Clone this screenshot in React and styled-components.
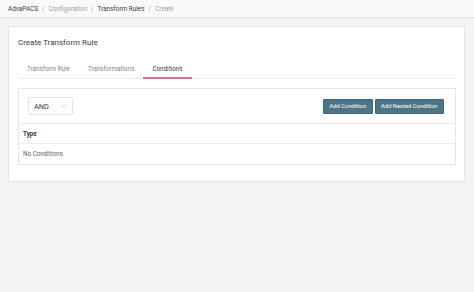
import React, { useState } from "react";
import styled, { createGlobalStyle } from "styled-components";

const GlobalStyle = createGlobalStyle`
  html, body {
    margin: 0;
    padding: 0;
    background: #f4f4f4;
    font-family: Roboto, "Liberation Sans", Arial, sans-serif;
    color: #333;
  }
  * { box-sizing: border-box; }
`;

const Page = styled.div`
  min-height: 292px;
  background: #f4f4f4;
`;

const Breadcrumb = styled.nav`
  display: flex;
  align-items: center;
  height: 18px;
  padding: 0 8px;
  background: #fafafa;
  border-bottom: 1px solid #e9e9e9;
  box-shadow: 0 1px 1px rgba(0, 0, 0, 0.03);
  font-size: 6.4px;
`;

const Crumb = styled.span`
  color: ${(p) => (p.muted ? "#a0a0a0" : "#3a3a3a")};
`;

const Slash = styled.span`
  color: #a0a0a0;
  padding: 0 4px;
`;

const Content = styled.main`
  padding: 8px 9px 0 8px;
`;

const Card = styled.section`
  background: #fff;
  border: 1px solid #e6e6e6;
  box-shadow: 0 1px 2px rgba(0, 0, 0, 0.04);
  padding: 11px 9px 16px 9px;
`;

const Title = styled.h1`
  margin: 0 0 12px 0;
  font-size: 8px;
  line-height: 10px;
  font-weight: 400;
  color: #3a3a3a;
`;

const TabList = styled.div`
  display: flex;
  border-bottom: 1px solid #ebebeb;
`;

const Tab = styled.button`
  border: none;
  background: none;
  font-family: inherit;
  font-size: 6.3px;
  line-height: 8px;
  padding: 5px 9px 4px;
  margin-bottom: -1px;
  cursor: pointer;
  color: ${(p) => (p.active ? "#3a3a3a" : "#858585")};
  border-bottom: 2px solid ${(p) => (p.active ? "#e06a93" : "transparent")};
`;

const Panel = styled.div`
  margin-top: 9px;
  margin-right: -1px;
  border: 1px solid #e6e6e6;
`;

const Toolbar = styled.div`
  display: flex;
  align-items: center;
  justify-content: space-between;
  padding: 8px 11px 8px 9px;
  border-bottom: 1px solid #ececec;
`;

const Select = styled.div`
  display: flex;
  align-items: center;
  justify-content: space-between;
  width: 45px;
  height: 18px;
  padding: 0 6px 0 5px;
  border: 1px solid #e2e2e2;
  border-radius: 2px;
  font-size: 7.4px;
  color: #3a3a3a;
`;

const Chevron = () => (
  <svg width="5" height="4" viewBox="0 0 10 6" fill="none">
    <path d="M1 1l4 4 4-4" stroke="#b5b5b5" strokeWidth="1.3" />
  </svg>
);

const Actions = styled.div`
  display: flex;
  gap: 2px;
`;

const Button = styled.button`
  height: 15px;
  padding: 0 5.5px;
  border: 1px solid #3f6676;
  border-radius: 1px;
  background: #4d7587;
  color: #fff;
  font-family: inherit;
  font-size: 5.8px;
  font-weight: 400;
  cursor: pointer;
`;

const Row = styled.div`
  display: flex;
  align-items: center;
  height: 20px;
  padding: 0 4px;
  font-size: 6.3px;
  font-weight: ${(p) => (p.head ? 700 : 400)};
  color: ${(p) => (p.head ? "#333" : "#5e5e5e")};
  border-bottom: ${(p) => (p.head ? "1px solid #ececec" : "none")};
`;

const tabs = ["Transform Rule", "Transformations", "Conditions"];

export default function App() {
  const [active, setActive] = useState("Conditions");
  return (
    <Page>
      <GlobalStyle />
      <Breadcrumb>
        <Crumb>AdvaPACS</Crumb>
        <Slash>/</Slash>
        <Crumb muted>Configuration</Crumb>
        <Slash>/</Slash>
        <Crumb>Transform Rules</Crumb>
        <Slash>/</Slash>
        <Crumb muted>Create</Crumb>
      </Breadcrumb>
      <Content>
        <Card>
          <Title>Create Transform Rule</Title>
          <TabList>
            {tabs.map((t) => (
              <Tab key={t} active={t === active} onClick={() => setActive(t)}>
                {t}
              </Tab>
            ))}
          </TabList>
          <Panel>
            <Toolbar>
              <Select>
                AND
                <Chevron />
              </Select>
              <Actions>
                <Button>Add Condition</Button>
                <Button>Add Nested Condition</Button>
              </Actions>
            </Toolbar>
            <Row head>Type</Row>
            <Row>No Conditions</Row>
          </Panel>
        </Card>
      </Content>
    </Page>
  );
}
